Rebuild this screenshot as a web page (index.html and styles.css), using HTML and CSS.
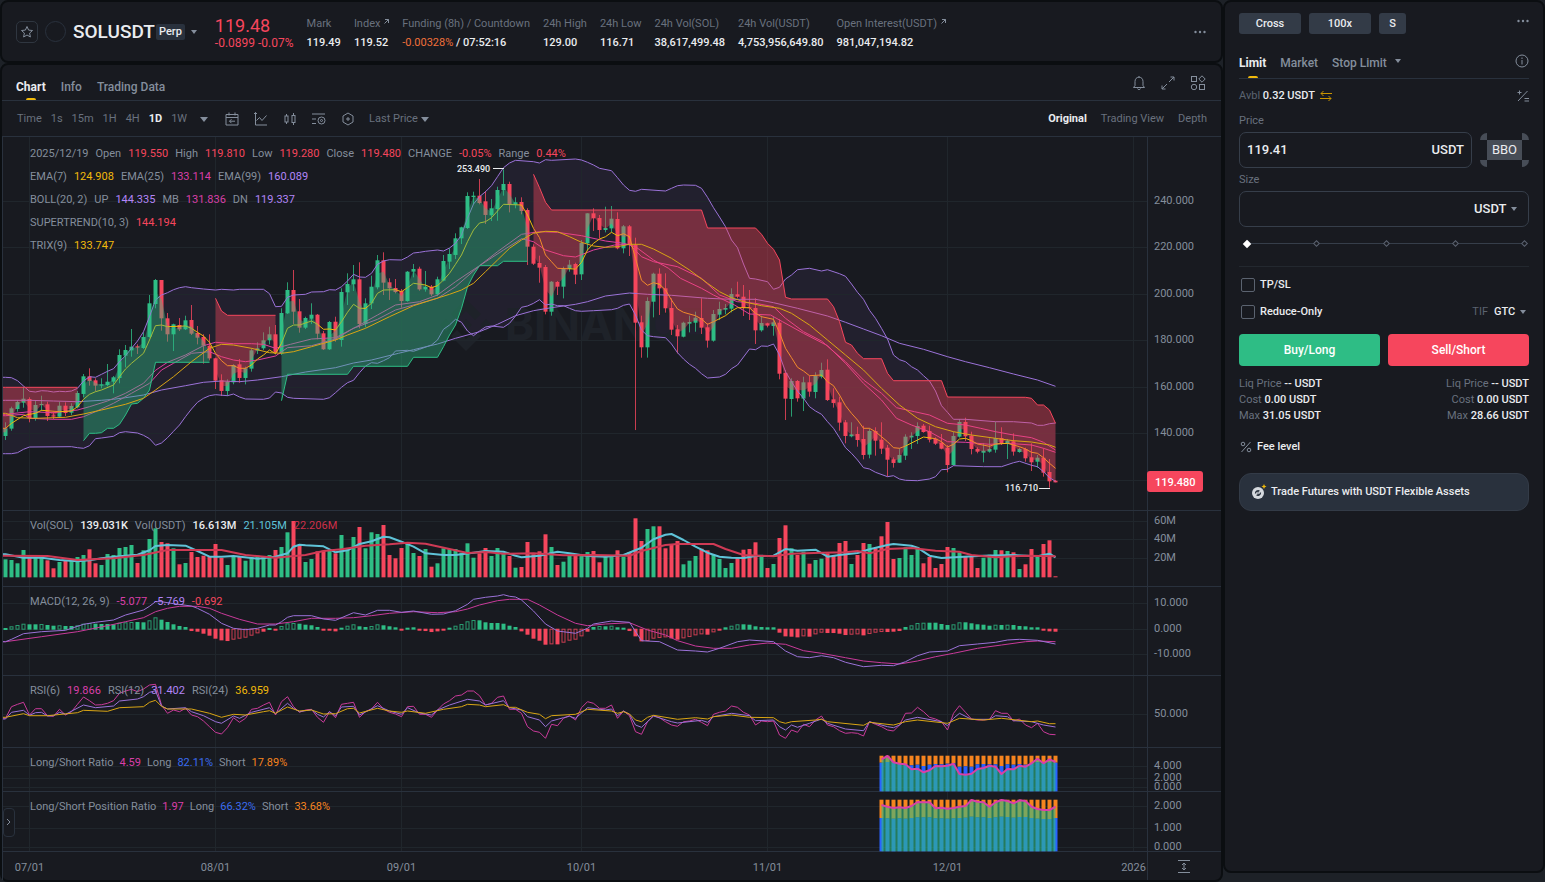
FILE: index.html
```html
<!doctype html>
<html lang="en">
<head>
	<meta charset="UTF-8" />
	<meta name="viewport" content="width=device-width, initial-scale=1" />
	<title>119.48 | SOLUSDT | Futures</title>
	<link rel="stylesheet" href="styles.css">
</head>
<body>

<div class="left">
	<header class="card ticker">
		<button class="icon-btn star" aria-label="Favorite">
			<svg width="14" height="14" viewBox="0 0 14 14"><path d="M7 1.5l1.6 3.6 3.9.4-2.9 2.6.8 3.9L7 10l-3.4 2 .8-3.9L1.500 5.500l3.900-.4z"/></svg>
		</button>
		<span class="coin"></span>
		<button class="symbol"><b>SOLUSDT</b><i>Perp</i><span class="caret"></span></button>
		<div class="last">
			<strong>119.48</strong>
			<span>-0.0899 -0.07%</span>
		</div>
		<dl class="stats">
			<div><dt>Mark</dt><dd>119.49</dd></div>
			<div><dt>Index <svg class="ext" width="5" height="5" viewBox="0 0 5 5"><path d="M.5 4.500l4-4M1 .5h3.500V4"/></svg></dt><dd>119.52</dd></div>
			<div><dt>Funding (8h) / Countdown</dt><dd><em>-0.00328%</em> / 07:52:16</dd></div>
			<div><dt>24h High</dt><dd>129.00</dd></div>
			<div><dt>24h Low</dt><dd>116.71</dd></div>
			<div><dt>24h Vol(SOL)</dt><dd>38,617,499.48</dd></div>
			<div><dt>24h Vol(USDT)</dt><dd>4,753,956,649.80</dd></div>
			<div><dt>Open Interest(USDT) <svg class="ext" width="5" height="5" viewBox="0 0 5 5"><path d="M.5 4.500l4-4M1 .5h3.500V4"/></svg></dt><dd>981,047,194.82</dd></div>
		</dl>
		<button class="icon-btn dots" aria-label="More"><svg width="12" height="4" viewBox="0 0 12 4"><circle cx="1.500" cy="2" r="1.200"/><circle cx="6" cy="2" r="1.200"/><circle cx="10.500" cy="2" r="1.200"/></svg></button>
	</header>

	<main class="card chart">
		<nav class="tabs">
			<a href="#" class="on">Chart</a>
			<a href="#">Info</a>
			<a href="#">Trading Data</a>
			<div class="tools">
				<button class="icon-btn" aria-label="Alerts"><svg width="14" height="16" viewBox="0 0 14 16"><path d="M1.500 12.500h11l-1.500-2V6.500C11 4 9.500 2.200 7 2.200S3 4 3 6.500v4zM5.500 13.500c.5 1.500 2.500 1.500 3 0M7 1v1.200"/></svg></button>
				<button class="icon-btn" aria-label="Expand"><svg width="14" height="14" viewBox="0 0 14 14"><path d="M8 6l5-5M9.500 1H13v3.500M6 8l-5 5M4.500 13H1V9.500"/></svg></button>
				<button class="icon-btn" aria-label="Widgets"><svg width="16" height="16" viewBox="0 0 16 16"><rect x="1.500" y="1.500" width="5" height="5"/><path d="M12 .8L15.200 4 12 7.200 8.800 4z"/><circle cx="4" cy="12" r="2.700"/><rect x="9.500" y="9.500" width="5" height="5"/></svg></button>
			</div>
		</nav>
		<div class="toolbar">
			<span>Time</span>
			<button>1s</button>
			<button>15m</button>
			<button>1H</button>
			<button>4H</button>
			<button class="on">1D</button>
			<button>1W</button>
			<button class="more" aria-label="More intervals"><span class="caret"></span></button>
			<div class="icons">
				<button class="icon-btn" aria-label="Go to date"><svg width="14" height="14" viewBox="0 0 14 14"><path d="M1 2.500h12v10.500H1zM1 5.500h12M4 .5v3M10 .5v3M10 9.200H4.500M6.500 7.200l-2 2 2 2"/></svg></button>
				<button class="icon-btn" aria-label="Indicators"><svg width="14" height="14" viewBox="0 0 14 14"><path d="M1.500.5v12.500H13M2.500 8.500l3-3 2.500 3 4.500-5M0 2l1.500-1.500L3 2"/></svg></button>
				<button class="icon-btn" aria-label="Candle style"><svg width="14" height="14" viewBox="0 0 14 14"><rect x="2" y="4" width="3" height="6"/><rect x="9" y="3.500" width="3" height="7"/><path d="M3.500 2v2M3.500 10v2M10.500 1v2.500M10.500 10.500V13"/></svg></button>
				<button class="icon-btn" aria-label="Settings"><svg width="14" height="14" viewBox="0 0 14 14"><path d="M0 2h13M0 7h4M0 11.500h4"/><circle cx="9.500" cy="8.500" r="3.500"/><circle cx="9.500" cy="8.500" r="1"/></svg></button>
				<button class="icon-btn" aria-label="Tools"><svg width="14" height="14" viewBox="0 0 14 14"><path d="M7 1l5 3v6l-5 3-5-3V4zM7 5v4M5 7h4"/></svg></button>
			</div>
			<button class="price-type">Last Price <span class="caret"></span></button>
			<div class="views">
				<button class="on">Original</button>
				<button>Trading View</button>
				<button>Depth</button>
			</div>
		</div>

		<div class="panes">
			<section class="pane main" id="main">
				<div class="legend">
					<p>2025/12/19 <span>Open</span><b class="red">119.550</b><span>High</span><b class="red">119.810</b><span>Low</span><b class="red">119.280</b><span>Close</span><b class="red">119.480</b><span>CHANGE</span><b class="red">-0.05%</b><span>Range</span><b class="red">0.44%</b></p>
					<p>EMA(7)<b class="yellow">124.908</b><span>EMA(25)</span><b class="pink">133.114</b><span>EMA(99)</span><b class="purple">160.089</b></p>
					<p>BOLL(20, 2)<span>UP</span><b class="purple">144.335</b><span>MB</span><b class="pink">131.836</b><span>DN</span><b class="purple">119.337</b></p>
					<p>SUPERTREND(10, 3)<b class="red">144.194</b></p>
					<p>TRIX(9)<b class="yellow">133.747</b></p>
				</div>
			</section>
			<section class="pane vol" id="vol">
				<div class="legend"><p>Vol(SOL)<b class="white">139.031K</b><span>Vol(USDT)</span><b class="white">16.613M</b><b class="cyan">21.105M</b><b class="crimson">22.206M</b></p></div>
			</section>
			<section class="pane macd" id="macd">
				<div class="legend"><p>MACD(12, 26, 9)<b class="pink">-5.077</b><b class="purple">-5.769</b><b class="red">-0.692</b></p></div>
			</section>
			<section class="pane rsi" id="rsi">
				<div class="legend"><p>RSI(6)<b class="pink">19.866</b><span>RSI(12)</span><b class="purple">31.402</b><span>RSI(24)</span><b class="yellow">36.959</b></p></div>
			</section>
			<section class="pane ratio" id="ratio">
				<div class="legend"><p>Long/Short Ratio<b class="pink">4.59</b><span>Long</span><b class="blue">82.11%</b><span>Short</span><b class="orange">17.89%</b></p></div>
			</section>
			<section class="pane position" id="position">
				<div class="legend"><p>Long/Short Position Ratio<b class="pink">1.97</b><span>Long</span><b class="blue">66.32%</b><span>Short</span><b class="orange">33.68%</b></p></div>
			</section>
			<section class="pane time" id="time"></section>
			<button class="drawer" aria-label="Drawing tools"><svg width="6" height="8" viewBox="0 0 6 8"><path d="M1 1l3 3-3 3"/></svg></button>
		</div>
	</main>
</div>

<aside class="card order">
	<div class="modes">
		<button class="wide">Cross</button>
		<button class="wide">100x</button>
		<button>S</button>
		<button class="icon-btn dots" aria-label="More"><svg width="12" height="4" viewBox="0 0 12 4"><circle cx="1.500" cy="2" r="1.200"/><circle cx="6" cy="2" r="1.200"/><circle cx="10.500" cy="2" r="1.200"/></svg></button>
	</div>
	<nav class="types">
		<a href="#" class="on">Limit</a>
		<a href="#">Market</a>
		<a href="#">Stop Limit<span class="caret"></span></a>
		<button class="icon-btn" aria-label="Info"><svg width="14" height="14" viewBox="0 0 14 14"><circle cx="7" cy="7" r="6"/><path d="M7 6v4.500M7 3.500V5"/></svg></button>
	</nav>
	<div class="avbl">
		<span>Avbl <b>0.32 USDT</b></span>
		<button class="icon-btn swap" aria-label="Transfer"><svg width="12" height="12" viewBox="0 0 12 12"><path d="M12 3.500H1M3.500 1L1 3.500 3.500 6M0 8.500h11M8.500 6L11 8.500 8.500 11"/></svg></button>
		<button class="icon-btn calc" aria-label="Calculator"><svg width="12" height="12" viewBox="0 0 12 12"><path d="M10.500 1L1 11M2.500.5v4M.5 2.500h4M7.500 8.500H12M7.500 11H12"/></svg></button>
	</div>
	<label for="price">Price</label>
	<div class="price-row">
		<div class="field">
			<input id="price" type="text" value="119.41">
			<span>USDT</span>
		</div>
		<button class="bbo">BBO</button>
	</div>
	<label for="size">Size</label>
	<div class="field">
		<input id="size" type="text">
		<select aria-label="Unit"><option>USDT</option><option>SOL</option></select>
		<span class="caret"></span>
	</div>
	<div class="slider">
		<i></i><i></i><i></i><i></i><i></i>
		<input type="range" min="0" max="100" value="0" aria-label="Amount">
	</div>
	<div class="options">
		<div><input type="checkbox" id="tpsl"><label for="tpsl">TP/SL</label></div>
		<div>
			<input type="checkbox" id="reduce"><label for="reduce">Reduce-Only</label>
			<label class="tif" for="tif">TIF</label>
			<select id="tif"><option>GTC</option><option>IOC</option><option>FOK</option></select><span class="caret"></span>
		</div>
	</div>
	<div class="actions">
		<button class="buy">Buy/Long</button>
		<button class="sell">Sell/Short</button>
	</div>
	<div class="costs">
		<div>
			<p>Liq Price <b>-- USDT</b></p>
			<p>Cost <b>0.00 USDT</b></p>
			<p>Max <b>31.05 USDT</b></p>
		</div>
		<div>
			<p>Liq Price <b>-- USDT</b></p>
			<p>Cost <b>0.00 USDT</b></p>
			<p>Max <b>28.66 USDT</b></p>
		</div>
	</div>
	<a href="#" class="fee"><svg width="12" height="12" viewBox="0 0 12 12"><circle cx="3" cy="3" r="1.800"/><circle cx="9" cy="9" r="1.800"/><path d="M10.500 1l-9 10"/></svg>Fee level</a>
	<a href="#" class="promo"><svg width="16" height="16" viewBox="0 0 16 16"><circle cx="7" cy="9" r="6" fill="#d5d9de"/><path d="M4.500 9.500a2.700 2.700 0 0 1 4-2.500M9.500 8.500a2.700 2.700 0 0 1-4 2.500M7 6.500v2M7 9.500v2" fill="none" stroke="#29313d" stroke-width="1.300"/><path d="M13 0l.8 1.700 1.700.8-1.700.8L13 5l-.8-1.700-1.700-.8 1.700-.8z" fill="#f0b90b"/></svg>Trade Futures with USDT Flexible Assets</a>
</aside>

<script type="text/javascript" src="chart.js"></script>
</body>
</html>
```
FILE: styles.css
```css
*{box-sizing: border-box;}
body{
	margin: 0;
	min-height: 100vh;
	display: flex;
	align-items: flex-start;
	background: #1d2127;
	color: #eaecef;
	font: 11px/16px Roboto, "Liberation Sans", sans-serif;
}
a{color: inherit; text-decoration: none;}
button, input, select{
	margin: 0;
	padding: 0;
	border: 0;
	background: none;
	color: inherit;
	font: inherit;
	outline: 0;
}
select{appearance: none; font-weight: 500;}
option{background: #181a20;}
dl, dd, p{margin: 0;}
b{font-weight: 500;}

.card{
	background: #181a20;
	border: 2px solid #0b0e11;
	border-radius: 8px;
}
.left{
	flex: 1;
	min-width: 0;
}
.icon-btn{display: flex;}
.icon-btn svg, .drawer svg, .fee svg, .ext{
	fill: none;
	stroke: #848e9c;
}
.dots svg{fill: #848e9c; stroke: none;}
.caret{
	display: inline-block;
	border: 4px solid transparent;
	border-top: 5px solid #848e9c;
	border-bottom: 0;
}
.symbol .caret, .order .caret{
	border-width: 4px 3px 0;
}

/* ticker */
.ticker{
	height: 63px;
	display: flex;
	align-items: center;
	padding: 0 15px 0 14px;
}
.star{
	width: 22px;
	height: 22px;
	align-items: center;
	justify-content: center;
	border: 1px solid #2f3640;
	border-radius: 5px;
}
.coin{
	width: 21px;
	height: 21px;
	margin-left: 7px;
	border: 1px solid #29313d;
	border-radius: 50%;
}
.symbol{
	display: flex;
	align-items: center;
	margin-left: 7px;
}
.symbol b{font-size: 19px; line-height: 22px; padding-top: 1px;}
.symbol i{
	margin: 0 6px 0 1px;
	padding: 0 3px;
	border-radius: 2px;
	background: #29313d;
	font-style: normal;
	font-weight: 500;
}
.last{
	margin-left: 18px;
	padding-top: 5px;
	display: flex;
	flex-direction: column;
	color: #f6465d;
}
.last strong{font-size: 18px; line-height: 18px; font-weight: 400;}
.last span{font-size: 12px; line-height: 17px;}
.stats{
	display: flex;
	gap: 13px;
	margin-left: 13px;
	padding-top: 2px;
	line-height: 19px;
	white-space: nowrap;
}
.stats dt{color: #69717e;}
.stats dd{font-weight: 500;}
.stats em{color: #f0703a; font-style: normal; font-weight: 400;}
.ext{vertical-align: 3px; margin-left: 1px;}
.ticker .dots{margin-left: auto;}

/* chart card */
.chart{height: 819px;}
.tabs{
	height: 36px;
	display: flex;
	align-items: flex-end;
	gap: 15px;
	padding: 0 15px 0 14px;
	border-bottom: 1px solid #29313d;
	color: #848e9c;
	font-size: 12px;
	font-weight: 500;
}
.tabs > a{
	padding-bottom: 5px;
	position: relative;
}
.on{color: #eaecef; font-weight: 700;}
.tabs .on::after, .types .on::after{
	content: "";
	position: absolute;
	left: 50%;
	bottom: 0;
	width: 10px;
	height: 2px;
	margin-left: -5px;
	border-radius: 2px 2px 0 0;
	background: #f0b90b;
}
.tools{
	display: flex;
	align-items: center;
	gap: 15px;
	margin-left: auto;
	padding-bottom: 9px;
}
.toolbar{
	height: 36px;
	display: flex;
	align-items: center;
	gap: 9px;
	padding: 1px 14px 0 15px;
	border-bottom: 1px solid #29313d;
	color: #69717e;
}
.more{margin-left: 4px;}
.icons{
	display: flex;
	gap: 15px;
	margin: 0 5px 0 8px;
}
.views{
	display: flex;
	gap: 14px;
	margin-left: auto;
}

.panes{position: relative; border-left: 1px solid #29313d;}
.pane{
	position: relative;
	border-bottom: 1px solid #29313d;
}
.pane > svg{
	display: block;
	width: 100%;
	height: 100%;
	overflow: visible;
}
.pane text{
	fill: #848e9c;
	font-size: 11px;
}
.main{height: 374px;}
.vol{height: 76px;}
.macd{height: 89px;}
.rsi{height: 72px;}
.ratio{height: 44px;}
.position{height: 60px;}
.time{height: 28px; border: 0;}
.legend{
	position: absolute;
	top: 7px;
	left: 27px;
	color: #848e9c;
	line-height: 16px;
}
.main .legend{top: 5px; line-height: 23px;}
.legend p{
	display: flex;
	gap: 7px;
	white-space: nowrap;
}
.ratio .legend p, .position .legend p{gap: 6px;}
.legend b{font-weight: 400;}
.legend .white{color: #eaecef; font-weight: 500;}
.red{color: #f6465d;}
.yellow{color: #f0b90b;}
.pink{color: #d93fa8;}
.purple{color: #b385f8;}
.cyan{color: #5fc3d8;}
.crimson{color: #cf304a;}
.blue{color: #3a6cf0;}
.orange{color: #f6841f;}
.pane .mark{fill: #eaecef; font-size: 9px; font-weight: 500;}
.pane .now{fill: #fff; font-weight: 500;}
.pane .watermark{
	fill: #1e2229;
	font: 700 44px Inter, sans-serif;
}
.drawer{
	position: absolute;
	left: 0;
	bottom: 43px;
	width: 12px;
	height: 29px;
	border: 1px solid #29313d;
	border-radius: 4px;
	background: #181a20;
}

/* order form */
.order{
	width: 322px;
	min-height: 873px;
	padding: 11px 14px;
}
.modes{
	display: flex;
	gap: 8px;
}
.modes button{
	width: 27px;
	height: 21px;
	border-radius: 3px;
	background: #333b47;
	font-weight: 500;
}
.modes .wide{width: 62px;}
.modes .dots{
	width: auto;
	margin: 6px 0 0 auto;
	background: none;
}
.types{
	display: flex;
	align-items: flex-end;
	gap: 14px;
	height: 39px;
	border-bottom: 1px solid #29313d;
	color: #848e9c;
	font-size: 12px;
	font-weight: 500;
}
.types > a{position: relative; padding-bottom: 7px;}
.types .caret{margin-left: 8px; vertical-align: 4px;}
.types .icon-btn{margin-left: auto; padding-bottom: 10px;}
.avbl{
	display: flex;
	align-items: center;
	gap: 5px;
	margin: 9px 0;
	color: #5b6370;
}
.avbl b{color: #eaecef;}
.swap svg{stroke: #c99400;}
.calc{margin-left: auto;}
.order > label{color: #69717e; display: block; margin-bottom: 3px;}
.price-row{
	display: flex;
	gap: 8px;
	margin-bottom: 4px;
}
.field{
	flex: 1;
	display: flex;
	align-items: center;
	height: 36px;
	padding: 0 7px;
	border: 1px solid #363e4a;
	border-radius: 7px;
	font-size: 13px;
	font-weight: 500;
}
.field input{flex: 1; min-width: 0; font-size: 13px;}
.field > .caret{margin: 0 4px;}
.bbo{
	width: 49px;
	height: 34px;
	margin-top: 1px;
	border-radius: 7px;
	background:
		linear-gradient(#474d57, #474d57) center/35px 20px,
		linear-gradient(#474d57, #474d57) 0 0/7px 7px,
		linear-gradient(#474d57, #474d57) 100% 0/7px 7px,
		linear-gradient(#474d57, #474d57) 0 100%/7px 7px,
		linear-gradient(#474d57, #474d57) 100% 100%/7px 7px;
	background-repeat: no-repeat;
	font-size: 13px;
}
.slider{
	position: relative;
	display: flex;
	justify-content: space-between;
	height: 7px;
	margin: 13px 1px 19px 5px;
	background: linear-gradient(#363e4a, #363e4a) center/270px 1px no-repeat;
}
.slider i{
	width: 5px;
	height: 5px;
	margin: 1px;
	border: 1px solid #5b6370;
	background: #181a20;
	transform: rotate(45deg);
}
.slider input{
	position: absolute;
	inset: 0;
	width: 100%;
	height: 7px;
	appearance: none;
}
.slider input::-webkit-slider-thumb{
	appearance: none;
	width: 6px;
	height: 6px;
	background: #fff;
	transform: rotate(45deg);
}
.options{
	display: flex;
	flex-direction: column;
	gap: 11px;
	padding: 10px 2px 0;
	border-top: 1px solid #23282f;
}
.options div{display: flex; align-items: center;}
.options input{
	appearance: none;
	width: 14px;
	height: 14px;
	margin-right: 5px;
	border: 1px solid #5b6370;
	border-radius: 2px;
}
.options label{font-weight: 500;}
.options .tif{margin: 0 6px 0 auto; color: #5b6370; font-weight: 400;}
.options .caret{margin: 0 1px 0 4px;}
.actions{
	display: flex;
	gap: 8px;
	margin: 14px 0 10px;
}
.actions button{
	flex: 1;
	height: 32px;
	border-radius: 4px;
	color: #fff;
	font-size: 12px;
	font-weight: 500;
}
.buy{background: #2ebd85;}
.sell{background: #f6465d;}
.costs{
	display: flex;
	justify-content: space-between;
	color: #69717e;
}
.costs div + div{text-align: right;}
.costs b{color: #eaecef;}
.fee{
	display: flex;
	align-items: center;
	gap: 5px;
	margin: 15px 0 18px 1px;
	font-weight: 500;
}
.promo{
	display: flex;
	align-items: center;
	gap: 4px;
	height: 38px;
	padding: 0 11px;
	border: 1px solid #333b47;
	border-radius: 12px;
	background: #29313d;
	font-weight: 500;
}
```
FILE: chart.js
```js
// values are plot units, 3 units to a pixel, measured down from the pane's base
var STEP = 6;
var AXIS = 74;
var GREEN = '#2ebd85', RED = '#f6465d', GRID = '#20262c', LINE = '#29313d';
var PURPLE = '#9b72d8', PINK = '#c93a9a', YELLOW = '#d9a514';

// up(1)/down(0), high, body top, body bottom, low
var candles = [
	[1,862,880,903,915],[1,815,820,881,887],[1,795,801,822,830],[1,755,791,803,818],[0,787,792,850,862],[1,795,810,850,857],[1,782,807,810,828],[0,800,808,843,858],
	[0,830,841,845,853],[1,800,812,845,849],[0,802,812,834,843],[1,805,813,833,840],[1,768,774,817,820],[1,717,724,777,787],[0,700,724,738,752],[0,730,736,752,769],
	[1,730,748,752,760],[1,687,740,750,754],[1,723,727,740,775],[1,643,660,729,745],[1,630,645,662,697],[1,582,635,646,665],[0,628,634,638,657],[1,592,606,639,642],
	[1,480,505,606,608],[1,432,435,507,520],[0,435,435,550,587],[0,534,550,598,620],[1,566,568,598,648],[0,549,570,583,588],[1,542,556,583,585],[0,510,555,596,600],
	[0,573,594,608,628],[0,598,606,632,686],[0,598,632,670,676],[0,668,670,737,762],[0,718,736,768,783],[1,733,740,768,783],[1,688,690,742,748],[0,672,688,729,743],
	[1,695,700,729,748],[1,640,646,701,710],[1,622,640,647,657],[1,592,616,640,645],[1,575,598,616,628],[0,570,598,653,658],[1,520,534,655,660],[1,442,465,535,537],
	[0,405,465,530,567],[0,492,529,578,593],[1,545,549,578,582],[1,505,539,551,567],[0,537,539,596,613],[0,588,595,643,645],[1,558,561,643,645],[0,545,560,614,620],
	[1,460,471,615,635],[1,415,447,472,510],[1,390,433,448,468],[0,382,433,567,580],[1,490,505,567,577],[1,422,455,505,522],[1,360,376,457,463],[0,352,376,443,480],
	[0,430,442,460,495],[0,432,459,471,475],[0,462,468,498,518],[1,408,410,498,500],[1,387,402,410,427],[0,395,401,463,467],[1,408,455,463,470],[0,450,455,478,483],
	[1,425,433,478,483],[1,360,378,437,439],[1,340,357,380,402],[1,295,310,360,372],[1,275,277,310,327],[1,172,183,279,282],[1,170,182,186,207],[0,132,182,204,208],
	[0,168,199,240,267],[1,192,220,241,258],[1,155,165,222,257],[1,103,147,165,182],[0,140,147,208,232],[1,187,202,209,220],[0,187,201,228,238],[0,220,225,335,390],
	[0,328,335,386,390],[0,362,384,398,443],[0,390,396,530,538],[1,438,440,530,542],[0,438,441,455,480],[1,395,402,455,490],[1,375,389,402,410],[0,383,387,419,447],
	[1,315,324,418,435],[1,235,235,325,345],[0,220,235,250,288],[0,240,249,285,310],[1,215,279,285,292],[1,213,251,280,292],[0,232,252,340,343],[1,270,274,340,355],
	[0,270,274,330,363],[0,308,330,563,885],[0,542,562,637,668],[1,487,498,637,668],[1,413,416,500,547],[0,400,416,460,540],[0,415,460,520,533],[0,490,519,584,600],
	[0,570,583,604,655],[1,560,563,605,607],[1,542,561,566,592],[1,530,548,563,590],[0,490,549,578,597],[0,565,577,617,638],[1,525,537,617,620],[1,500,522,539,555],
	[1,507,519,524,538],[1,460,477,521,532],[0,440,478,485,490],[0,450,485,519,543],[0,465,517,520,555],[0,490,519,586,627],[1,542,564,586,590],[0,563,565,572,577],
	[1,545,562,573,602],[0,553,563,716,733],[0,705,714,791,855],[1,730,738,792,845],[0,735,738,790,800],[1,725,742,791,828],[0,722,742,770,785],[1,712,723,771,790],
	[1,683,705,725,730],[0,673,704,795,798],[0,760,793,804,818],[0,785,802,863,887],[0,855,862,903,925],[1,862,898,904,907],[0,875,897,915,935],[0,872,912,960,973],
	[1,880,888,959,970],[0,877,888,917,962],[0,862,914,941,957],[0,930,938,974,1025],[0,967,973,984,998],[1,940,960,983,984],[1,898,905,962,975],[1,892,902,907,942],
	[1,862,873,903,927],[0,867,872,891,893],[0,872,888,914,922],[0,907,911,926,930],[0,897,923,941,943],[0,930,938,990,1012],[1,890,903,990,992],[1,853,861,905,908],
	[0,848,861,904,918],[0,890,902,942,958],[0,937,942,950,955],[1,925,947,953,982],[1,910,942,950,953],[1,860,909,944,953],[0,877,909,925,930],[1,912,917,924,972],
	[0,895,919,950,962],[1,938,942,951,953],[0,938,942,970,980],[0,925,967,982,1008],[1,960,968,980,998],[0,940,968,1013,1025],[0,972,1011,1039,1058],[0,1035,1037,1042,1042]
];

// line series: index, value, index, value ...
var bollUp = [0,727,1,728,2,737,3,753,4,769,5,771,6,767,7,768,8,771,9,769,10,770,11,768,12,760,13,738,14,725,15,727,16,718,17,709,18,701,19,680,20,662,21,640,22,618,23,590,24,545,25,495,26,480,27,473,28,464,29,458,30,455,31,458,33,462,35,465,36,463,38,465,39,463,43,463,44,476,45,515,46,514,47,487,48,480,50,478,51,471,53,470,54,464,55,465,56,455,57,438,58,418,59,426,60,427,61,415,62,388,63,378,64,374,66,375,67,366,68,354,69,352,70,349,72,345,73,348,74,339,75,325,76,300,77,250,78,207,79,185,80,170,81,152,82,125,83,98,84,84,85,76,88,80,89,84,90,74,91,76,95,72,96,75,97,82,98,90,99,100,101,107,102,128,103,150,104,166,105,169,106,163,110,168,111,160,112,152,113,150,115,151,116,160,117,187,118,218,119,246,120,275,121,315,122,338,123,387,124,430,125,432,127,440,128,463,129,457,130,432,131,420,132,404,134,400,136,408,137,404,139,416,140,424,141,447,142,472,143,493,144,526,145,550,146,580,147,612,148,660,149,674,150,680,151,695,152,705,153,722,154,738,155,768,156,812,157,832,158,853,160,853,165,860,168,860,171,864,172,871,173,871,174,866,175,864];
var bollDown = [0,956,1,956,2,953,3,943,4,936,11,935,12,938,13,940,14,932,15,911,16,909,18,904,19,893,20,890,22,894,23,901,24,911,25,931,26,924,27,908,28,889,29,870,30,845,31,822,32,802,33,790,34,782,35,779,37,782,38,777,39,786,40,792,43,793,44,789,45,771,46,774,47,787,48,790,53,793,54,788,55,773,56,757,57,743,58,736,59,713,60,693,61,683,62,685,63,677,64,668,65,648,67,646,68,649,69,643,71,630,72,615,73,583,74,570,75,553,76,562,77,588,78,602,79,588,80,576,81,573,83,577,84,565,85,543,86,517,87,513,88,505,89,494,90,510,91,507,92,512,93,512,94,520,95,527,96,529,98,527,101,524,102,520,103,511,104,507,105,540,106,585,107,602,108,605,110,608,111,627,112,653,113,672,114,688,115,700,116,716,117,729,119,726,120,718,121,701,122,690,123,666,124,642,125,644,126,633,127,634,128,627,129,660,130,710,131,740,132,768,133,790,134,815,135,828,136,838,137,860,138,880,139,908,140,938,141,955,142,975,143,998,144,1002,145,1012,147,1025,148,1022,149,1032,150,1036,152,1037,154,1032,155,1025,156,1004,157,1003,158,992,163,995,166,995,168,983,169,979,171,991,172,995,173,1010,174,1028,175,1039];
var bollMid = [0,842,3,838,4,850,8,853,11,853,13,845,15,830,18,805,21,775,24,745,26,705,28,685,31,655,34,650,36,665,38,675,40,680,42,675,45,663,47,638,51,632,55,612,58,580,62,553,65,525,69,505,72,490,75,455,79,392,82,350,86,298,89,290,92,292,96,302,100,318,103,325,105,335,108,375,110.5,400,112.5,430,116,460,118,480,121.5,510,124,537,127.5,540,129.5,560,133,595,137,632,140,685,143,745,146,795,148.5,850,151,870,154,890,157,920,160,922,164,928,167,925,171,930,173,940,175,952];
var ema25 = [0,838,4,830,8,833,12,825,14,815,17,798,20,775,23,745,25,706,27,682,30,660,33,632,35,622,38,626,41,626,43,628,45,640,47.5,628,51,612,55,608,58.5,575,62,540,65,510,69,500,72,480,75,440,79,392,83,345,86,311,88,320,90,345,93,362,95,366,98,345,101.5,330,104,328,106,365,108,380,112,395,116,430,119,480,122,500,125,505,128,515,130,550,133,590,136,618,140,680,143,735,146,775,148.5,818,151.5,830,154,840,157,865,160,870,162.5,880,165,890,168,900,171,908,173,922,175,945];
var ema99 = [0,796,4,796,8,798,12,800,16,796,18,793,20,788,23,780,26,765,30,752,33,742,36,738,39,740,42,735,46,725,50,711,55,698,58,684,61,675,65.5,655,68,644,72,627,75,610,79,590,82,568,85,542,88,527,91,518,95,508,97,500,100,483,104,474,107,478,111,481,117,490,121,493,125,493,128,503,132,520,137,543,140,562,143,582,146,602,149,625,153,643,157,665,160,680,164,698,168,717,172,735,175,754];
var ema7 = [0,880,1,865,3,842,4,838,5,835,6,826,9,830,11,828,12,815,13,793,14,778,15,770,16,765,18,750,19,725,20,702,21,685,23,655,24,615,25,572,26,570,27,575,30,573,31,580,32,592,33,603,34,622,35,655,36,677,37,692,38,692,39,700,40,700,41,690,42,672,43,660,44,645,45,656,46,625,47,580,48,570,49,570,51,558,52,568,53,583,54,582,55,585,56,560,57,532,58,508,59,520,60,520,61,505,62,475,63,465,65,464,66,470,67,458,68,445,70,450,71,458,72,452,73,435,74,415,75,388,76,360,77,320,78,285,79,264,80,260,81,248,82,228,83,208,86,210,87,240,88,280,89,308,90,360,91,380,92,400,95,402,96,382,97,345,98,325,99,312,100,305,101,292,102,302,103,296,104,305,105,370,106,436,107,451,108,443,109,448,110,465,111,495,112,522,113,532,115,542,116,552,117,568,118,560,120,542,121,528,122,518,124,518,125,535,126,545,128,553,129,593,130,640,131,668,132,697,133,708,134,722,136,720,137,740,138,752,139,780,140,812,141,835,142,855,143,880,144,880,145,890,146,905,147,920,148,938,149,940,150,933,152,915,153,906,155,911,156,920,157,936,158,928,159,912,160,910,161,917,162,927,164,934,165,927,167,925,169,935,170,942,171,952,172,955,173,968,174,985,175,1000];
var trix = [0,835,2,848,5,850,10,847,13,837,16,825,20,808,23,790,25,765,28,725,31,680,34,640,36,628,38,630,41,640,44,653,46,655,48,650,51,635,55,615,57,600,60,580,64,545,68,512,71,495,74,478,76,465,78,445,80,410,82,375,84,340,86,315,88,295,90,289,92,290,94,305,96,322,98,333,100,337,102,335,104,328,106,328,108,342,111,370,114,405,117,445,119,470,121,488,123,500,126,512,129,520,131,535,134,570,137,615,140,660,143,705,146,760,149,810,152,850,155,875,158,890,161,900,165,910,168,917,171,921,174,930,175,937];
var supertrend = [
	{color: RED, line: [0,757,12,757]},
	{color: GREEN, line: [13,917,14,895,15,895,16,893,17,880,18,880,19,868,20,840,21,807,22,805,23,790,24,765,25,682,34,682]},
	{color: RED, line: [35,490,36,528,37,541,45,541]},
	{color: GREEN, line: [46,797,47,718,57,718,58,694,67,694,68,667,72,667,73,635,74,600,75,570,76,520,77,455,78,420,79,392,82,392,83,379,87,379]},
	{color: RED, line: [88,118,89,158,90,202,91,225,116,225,117,279,125,279,126,298,127,325,128,343,129,375,130,487,131,492,137,492,138,515,139,560,140,622,141,630,142,655,143,671,146,671,147,715,148,737,156,737,157,786,170,787,171,790,172,810,173,810,174,825,175,865]}
];

var volume = [163,165,175,135,155,158,155,166,190,171,165,165,156,150,133,175,180,147,150,129,126,120,174,136,102,70,111,115,130,178,174,141,156,152,155,117,159,180,154,153,167,157,152,155,150,135,126,82,48,120,171,162,139,137,137,145,90,133,96,66,130,82,87,60,150,160,129,115,144,153,132,185,175,130,132,132,143,115,158,145,129,153,129,144,153,188,186,111,148,139,88,126,180,170,150,153,150,141,138,172,155,150,136,155,141,40,108,72,64,64,130,120,108,178,167,153,131,136,150,162,189,174,158,134,132,112,153,189,177,99,61,130,150,140,176,165,161,145,153,114,108,177,150,114,117,130,94,51,162,159,127,150,127,175,156,189,177,126,129,142,156,153,189,158,149,135,136,138,142,192,178,132,156,117,106,214];
var volFast = [0,148,3,158,6,158,9,165,12,169,14,166,16,160,19,154,22,149,24,136,25,123,27,120,30,122,32,138,34,155,36,155,38,153,42,161,45,155,47,145,48,125,49,119,50,121,53,124,55,142,57,136,59,117,61,109,63,95,64,97,66,110,68,125,70,145,73,150,75,150,78,143,80,138,83,140,85,152,86,157,89,152,92,140,94,145,97,153,100,155,103,150,106,128,108,103,110,89,111,87,113,105,115,125,117,143,119,155,121,158,123,159,125,153,128,152,130,132,132,137,135,134,137,155,139,150,142,144,144,133,147,120,148,117,151,122,152,128,154,152,156,159,159,156,163,152,168,150,172,154,174,146,175,157];
var volSlow = [0,152,7,153,12,165,18,160,23,150,27,135,33,135,36,135,40,150,45,158,50,150,53,138,56,133,60,122,64,118,67,113,70,116,74,132,77,144,80,141,83,146,88,145,93,151,98,150,104,152,106,138,110,120,112,117,118,117,120,132,123,150,128,154,131,146,136,143,140,142,142,138,144,145,147,132,151,129,155,137,159,140,161,150,165,157,170,152,175,154];

var macd = [2,7,11,15,13,13,14,11,9,10,8,8,10,15,17,15,14,14,13,18,19,20,20,19,25,34,27,20,13,8,5,-4,-6,-12,-18,-27,-32,-34,-30,-27,-24,-18,-11,-6,2,-2,8,16,17,15,12,10,5,-3,-2,-5,3,9,13,7,5,8,13,10,7,4,-3,3,4,-3,-4,-7,-5,-3,3,9,14,22,26,25,19,17,17,15,9,5,-5,-15,-27,-33,-45,-44,-44,-39,-33,-30,-20,-6,5,8,7,9,4,3,-4,-20,-35,-34,-27,-25,-23,-26,-30,-26,-22,-17,-14,-15,-8,-3,4,9,13,13,12,7,5,4,4,-9,-20,-21,-23,-20,-21,-14,-9,-10,-10,-12,-16,-15,-14,-17,-13,-9,-7,-7,-6,-4,5,10,17,18,18,18,14,11,13,19,19,16,13,12,9,12,11,12,11,8,7,4,4,-3,-5,-6];
var dif = [0,410,1,403,3,386,6,380,10,376,13,358,15,352,18,345,20,330,23,315,24,304,25,290,26,290,28,296,31,303,32,310,34,328,36,355,38,370,40,374,42,370,44,360,45,360,46,350,47,337,48,332,51,332,53,342,55,346,58,323,60,330,62,316,64,316,66,322,68,318,71,328,73,327,75,317,77,298,78,283,80,277,82,273,83,269,84,274,85,276,86,285,88,318,90,357,92,378,95,385,97,370,98,357,101,348,104,352,106,407,109,410,112,435,115,438,117,441,119,430,122,410,124,405,128,410,130,438,132,455,134,458,136,452,138,458,140,472,143,485,146,481,148,482,150,470,152,452,154,441,157,438,159,422,162,417,165,412,167,405,169,403,172,406,175,417];
var dea = [0,410,6,395,12,380,17,362,20,350,23,338,25,320,27,310,29,304,32,304,34,310,36,325,39,343,42,357,45,357,48,350,51,340,55,340,58,338,61,332,64,325,68,320,72,323,75,320,77,312,79,300,82,287,84,283,87,283,89,300,92,330,95,355,97,362,100,357,104,353,107,375,110,390,112,407,115,423,118,430,121,430,124,420,127,414,130,418,133,437,136,445,140,458,143,468,146,473,149,477,152,468,155,455,158,445,162,430,166,420,170,410,172,408,175,410];

var rsi6 = [640,605,598,592,630,611,611,632,634,613,630,620,598,576,587,600,599,595,587,565,558,553,560,552,540,538,600,625,615,620,610,630,635,648,665,682,687,668,638,652,640,613,610,600,592,630,590,575,605,622,615,613,637,652,620,638,598,595,592,637,620,612,592,612,622,627,635,605,604,628,628,637,615,597,587,573,570,558,558,572,600,595,577,573,613,613,625,665,678,682,700,658,662,640,632,645,608,590,595,610,610,600,640,618,632,680,688,650,632,638,650,660,664,650,648,643,652,662,628,622,618,603,607,622,630,660,648,650,648,690,700,675,682,658,665,645,633,660,665,677,685,683,685,693,650,658,665,675,678,660,625,624,607,620,637,642,650,675,625,602,622,642,645,645,643,617,625,625,648,642,660,668,655,680,688,689];
var rsi12 = [0,642,1,622,3,616,4,631,5,623,6,622,7,633,8,632,9,622,10,628,13,600,15,608,18,603,19,588,22,582,23,575,24,562,25,557,26,603,27,612,30,608,31,620,33,632,35,650,36,655,38,633,39,640,41,622,44,608,45,626,47,595,48,610,49,620,51,614,52,628,53,636,54,620,55,632,56,606,58,604,59,630,62,602,64,618,66,628,67,608,69,624,71,630,72,615,74,600,77,583,79,588,80,600,83,587,84,608,86,615,87,635,89,645,90,665,91,648,93,638,94,634,95,640,97,608,100,615,101,612,102,632,103,618,104,628,105,660,106,667,108,633,111,650,112,654,116,646,117,652,118,635,121,625,124,632,125,647,128,645,129,665,130,675,131,660,132,667,134,655,136,642,137,655,140,672,143,677,144,650,147,665,148,668,149,660,150,645,152,637,156,650,157,662,158,640,159,625,161,643,164,643,165,632,167,635,168,647,171,650,173,660,175,666];
var rsi24 = [0,637,3,626,4,632,7,632,12,623,13,616,17,619,19,608,23,605,24,592,25,586,26,604,27,612,31,612,34,625,36,637,38,628,40,630,43,620,44,617,45,625,47,606,49,618,51,615,53,627,55,626,57,611,58,610,59,624,62,610,64,618,66,622,67,618,70,625,73,613,76,605,77,598,79,600,80,605,83,599,84,607,85,607,87,622,89,628,90,641,91,632,95,628,97,613,101,618,102,625,103,620,104,627,105,645,106,650,107,637,108,631,112,643,115,638,117,642,118,635,121,630,124,637,128,638,129,650,130,655,131,650,135,645,136,643,137,650,143,661,144,652,148,660,150,650,152,645,157,655,159,640,163,645,166,640,171,650,172,648,174,656,175,656];

var ratioLine = [58,48,67,71,73,88,86,97,91,78,79,77,71,102,104,101,87,84,77,80,102,87,88,77,80,70,56,70,58,66];
var ratioLong = [68,66,68,70,72,76,74,78,74,72,73,71,70,80,79,80,73,72,73,73,78,73,74,72,74,71,67,70,68,68];
var posLine = [195,200,204,202,204,198,186,187,187,205,203,206,204,200,198,180,185,187,200,187,180,183,190,181,183,200,207,210,210,200];
var posLong = [234,235,236,235,236,234,232,232,232,235,235,236,235,234,233,230,232,232,234,232,230,231,233,231,231,234,236,237,237,234];

var months = [[4,'07/01'],[35,'08/01'],[66,'09/01'],[96,'10/01'],[127,'11/01'],[157,'12/01'],[188,'2026']];

function x(i){
	return 2.5 + i * STEP;
}
function rect(l, t, w, h, attrs){
	return '<rect x="' + l + '" y="' + t + '" width="' + w + '" height="' + h + '" ' + attrs + '/>';
}
function text(l, t, s, attrs){
	return '<text x="' + l + '" y="' + t + '" ' + (attrs || '') + '>' + s + '</text>';
}

function Pane(id, base){
	this.el = document.getElementById(id);
	this.w = this.el.clientWidth;
	this.h = this.el.clientHeight;
	this.plot = this.w - AXIS;
	this.base = base;
	this.out = '';
}
Pane.prototype.y = function(v){
	return Math.round((v / 3 - this.base) * 10) / 10;
};
// levels: value, label, value, label ...
Pane.prototype.grid = function(levels){
	for(var i = 0; i < months.length; i++){
		this.out += rect(x(months[i][0]) - 0.5, 0, 1, this.h, 'fill="' + GRID + '"');
	}
	for(i = 0; i < levels.length; i += 2){
		var t = Math.round(this.y(levels[i]));
		this.out += rect(0, t, this.plot, 1, 'fill="' + GRID + '"');
		if(levels[i + 1]) this.out += text(this.plot + 7, t + 3, levels[i + 1]);
	}
};
Pane.prototype.points = function(list){
	var pts = [];
	// series older than the window run up to the left edge
	if(list[0] === 0) pts.push('0,' + this.y(list[1]));
	for(var i = 0; i < list.length; i += 2){
		pts.push(x(list[i]) + ',' + this.y(list[i + 1]));
	}
	return pts;
};
Pane.prototype.line = function(list, color, width){
	this.out += '<polyline fill="none" stroke-linejoin="round" stroke="' + color + '" stroke-width="' + (width || 1) + '" points="' + this.points(list).join(' ') + '"/>';
};
Pane.prototype.area = function(pts, color, opacity){
	this.out += '<polygon fill="' + color + '" fill-opacity="' + opacity + '" points="' + pts.join(' ') + '"/>';
};
Pane.prototype.render = function(){
	this.out += rect(this.plot, 0, 1, this.h, 'fill="' + LINE + '"');
	var old = this.el.querySelector(':scope > svg');
	if(old) old.remove();
	this.el.insertAdjacentHTML('afterbegin', '<svg>' + this.out + '</svg>');
};

function spread(values, from){
	var list = [];
	for(var i = 0; i < values.length; i++){
		list.push(i + (from || 0), values[i]);
	}
	return list;
}

function drawMain(){
	var p = new Pane('main', 2);
	p.area(p.points(bollUp).concat(p.points(bollDown).reverse()), '#9b72d8', 0.08);
	p.out += '<g fill="#1e2229" transform="translate(463,188)"><path d="M0-26l15 15-6 6-9-9-9 9-6-6zM0 26l15-15-6-6-9 9-9-9-6 6zM-26 0l6-6 6 6-6 6zM26 0l-6-6-6 6 6 6zM0-6l6 6-6 6-6-6z"/></g>';
	p.out += text(502, 203, 'BINANCE', 'class="watermark"');
	p.grid([198,'240.000', 337,'220.000', 477,'200.000', 616,'180.000', 755,'160.000', 895,'140.000', 1034,'']);
	for(var i = 0; i < candles.length; i++){
		var c = candles[i];
		var fill = 'fill="' + (c[0] ? GREEN : RED) + '"';
		p.out += rect(x(i) - 0.5, p.y(c[1]), 1, (c[4] - c[1]) / 3, fill + ' opacity="0.8"');
		p.out += rect(x(i) - 2, p.y(c[2]), 4, Math.max((c[3] - c[2]) / 3, 1), fill);
	}
	p.line(bollUp, PURPLE);
	p.line(bollDown, PURPLE);
	p.line(ema99, PURPLE);
	p.line(bollMid, '#e0409f');
	p.line(ema25, '#e0409f');
	p.line(ema7, '#f0b90b');
	for(i = 0; i < supertrend.length; i++){
		var s = supertrend[i];
		var mids = [];
		for(var k = s.line[0]; k <= s.line[s.line.length - 2]; k++){
			mids.push(k, (candles[k][2] + candles[k][3]) / 2);
		}
		p.area(p.points(s.line).concat(p.points(mids).reverse()), s.color, 0.4);
		p.line(s.line, s.color);
	}
	p.line(trix, YELLOW);
	p.out += text(454, 35, '253.490', 'class="mark"') + rect(490, 31, 11, 1, 'fill="#eaecef"');
	p.out += text(1002, 354, '116.710', 'class="mark"') + rect(1036, 351, 11, 1, 'fill="#eaecef"');
	p.render();
	p.el.querySelector('svg').insertAdjacentHTML('beforeend',
		rect(p.plot, 334, 56, 21, 'rx="3" fill="' + RED + '"') + text(p.plot + 8, 349, '119.480', 'class="now"'));
}

function drawVolume(){
	var p = new Pane('vol', 6);
	p.grid([47,'60M', 103,'40M', 160,'20M']);
	for(var i = 0; i < volume.length; i++){
		p.out += rect(x(i) - 2, p.y(volume[i]), 4, (217 - volume[i]) / 3, 'fill="' + (candles[i][0] ? GREEN : RED) + '"');
	}
	p.line(volFast, '#5fc3d8', 2);
	p.line(volSlow, '#cf3a55', 2);
	p.render();
}

function drawMacd(){
	var p = new Pane('macd', 82);
	p.grid([293,'10.000', 371,'0.000', 448,'-10.000']);
	for(var i = 0; i < macd.length; i++){
		var v = macd[i];
		var color = v > 0 ? GREEN : RED;
		var t = v > 0 ? p.y(371 - v) : p.y(371);
		var h = Math.max(Math.abs(v) / 3, 1) + 1;
		// rising bars are hollow
		if(i > 0 && v > macd[i - 1] && h > 3){
			p.out += rect(x(i) - 1.5, t + 0.5, 3, h - 1, 'fill="none" stroke="' + color + '" stroke-opacity="0.8"');
		}else{
			p.out += rect(x(i) - 2, t, 4, h, 'fill="' + color + '"');
		}
	}
	p.line(dea, PINK);
	p.line(dif, PURPLE);
	p.render();
}

function drawRsi(){
	var p = new Pane('rsi', 171);
	p.grid([627,'50.000']);
	p.line(spread(rsi6), PINK);
	p.line(rsi12, PURPLE);
	p.line(rsi24, YELLOW);
	p.render();
}

function drawRatio(id, base, levels, top, bottom, longs, line){
	var p = new Pane(id, base);
	var from = candles.length - longs.length;
	p.grid(levels);
	for(var i = 0; i < longs.length; i++){
		var l = x(from + i) - 2;
		p.out += rect(l, p.y(top), 4, (longs[i] - top) / 3, 'fill="#f6841f"');
		p.out += rect(l, p.y(longs[i]), 4, (bottom - longs[i]) / 3, 'fill="#2962ff"');
	}
	var pts = p.points(spread(line, from));
	p.area(pts.concat([x(175) + ',' + p.y(bottom), x(from) + ',' + p.y(bottom)]), GREEN, 0.6);
	p.line(spread(line, from), '#d93fa8', 2);
	p.render();
}

function drawTime(){
	var p = new Pane('time', 0);
	for(var i = 0; i < months.length; i++){
		p.out += text(x(months[i][0]), 19, months[i][1], 'text-anchor="middle"');
	}
	p.out += '<path transform="translate(' + (p.plot + 31) + ',8)" fill="none" stroke="#848e9c" d="M0 .5h12M0 12.500h12M6 3v7M4 5l2-2 2 2M4 8l2 2 2-2"/>';
	p.render();
}

function draw(){
	drawMain();
	drawVolume();
	drawMacd();
	drawRsi();
	drawRatio('ratio', 8, [77,'4.000', 115,'2.000', 140,'0.000'], 47, 154, ratioLong, ratioLine);
	drawRatio('position', 52, [197,'2.000', 265,'1.000', 322,'0.000'], 179, 334, posLong, posLine);
	drawTime();
}

draw();
window.addEventListener('resize', draw);
```
